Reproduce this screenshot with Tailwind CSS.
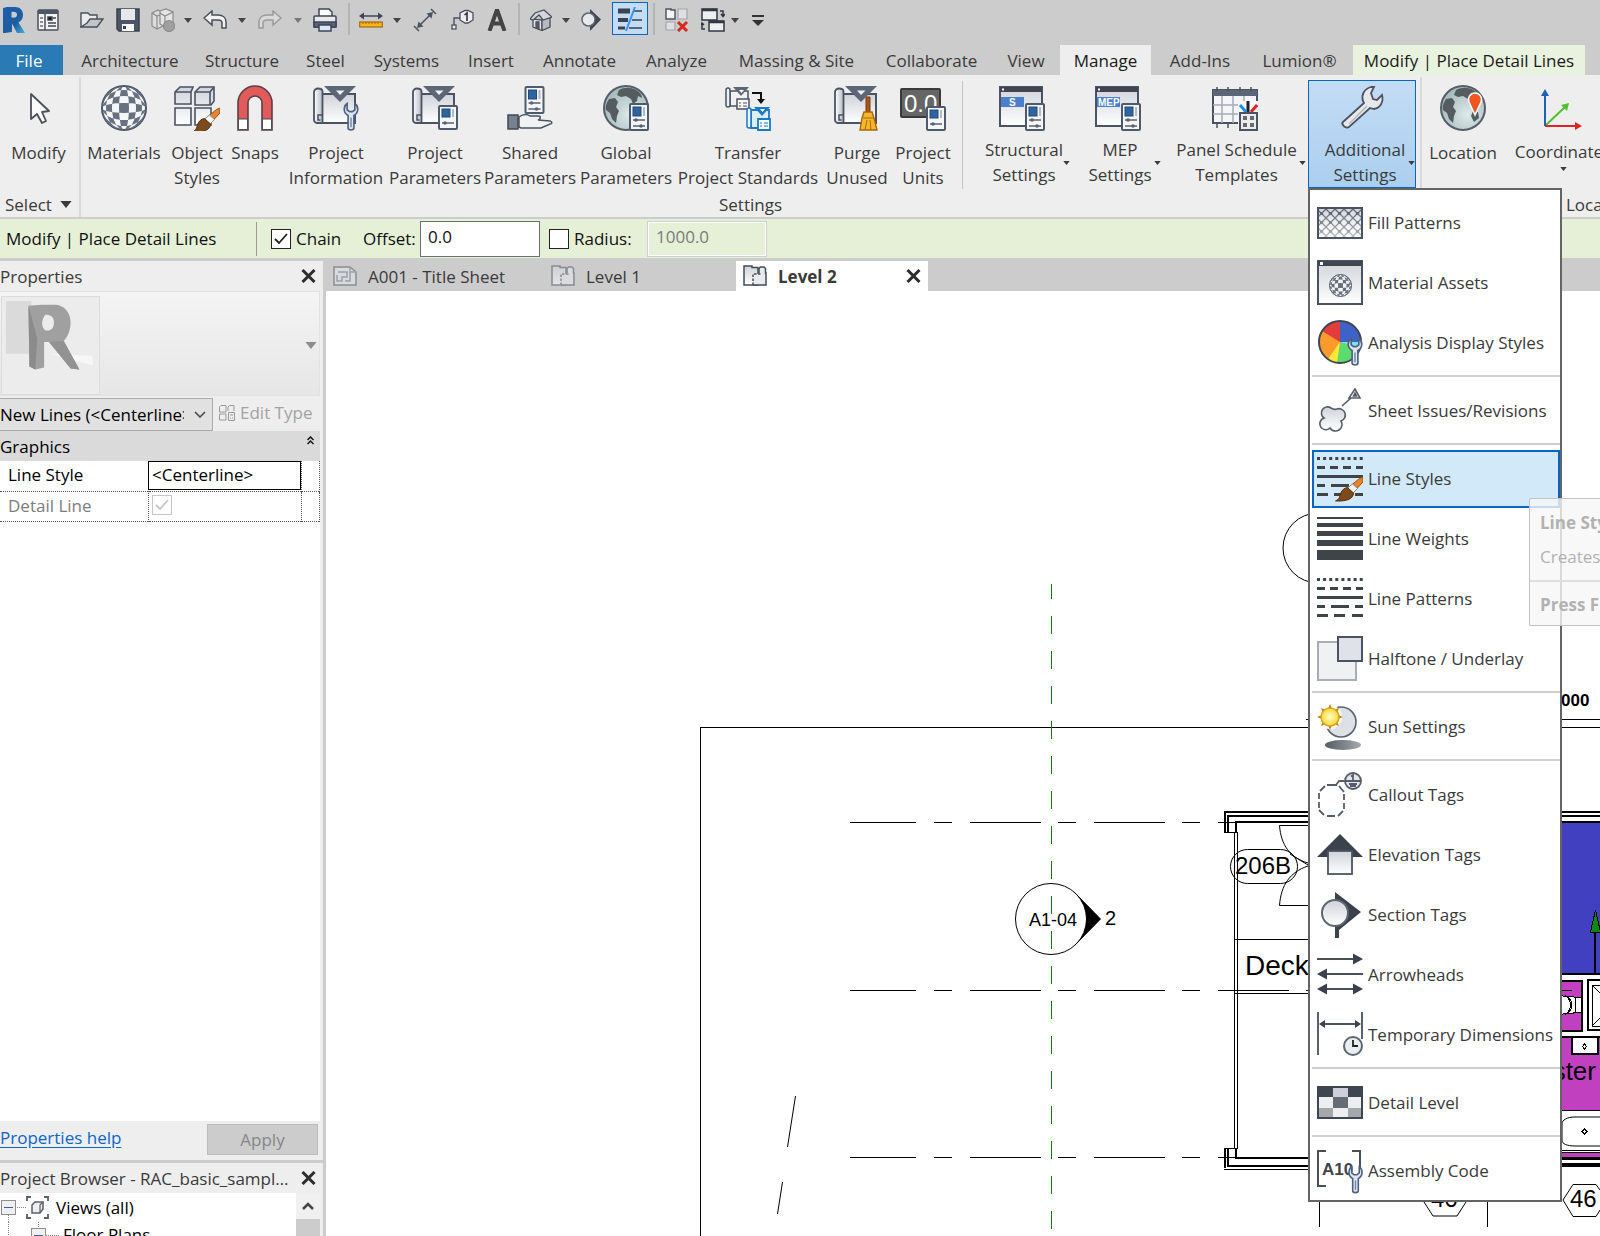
<!DOCTYPE html>
<html lang="en">

<head>
    <meta charset="UTF-8" />
    <title>Revit - Level 2</title>
    <meta name="viewport" content="width=device-width, initial-scale=1.0" />
    <script src="https://cdn.jsdelivr.net/npm/@tailwindcss/browser@4"></script>
    <style>
        body {
            font-family: 'Open Sans', 'Noto Sans', sans-serif;
        }
    </style>
</head>

<body class="h-screen flex flex-col overflow-hidden bg-[#cccccc] text-[17px] leading-[25px] text-[#3a3a3a]">

    <!-- Shared icon parts -->
    <svg width="0" height="0" class="absolute" aria-hidden="true">
        <defs>
            <linearGradient id="steel" x1="0" y1="0" x2="0" y2="1">
                <stop offset="0" stop-color="#cfd3db" />
                <stop offset="1" stop-color="#ffffff" />
            </linearGradient>
            <linearGradient id="steelH" x1="0" y1="0" x2="1" y2="0">
                <stop offset="0" stop-color="#ffffff" />
                <stop offset="1" stop-color="#b4bac6" />
            </linearGradient>
            <linearGradient id="logo" x1="0" y1="0" x2="1" y2="1">
                <stop offset="0" stop-color="#1c5fb0" />
                <stop offset="0.6" stop-color="#1d5c9e" />
                <stop offset="1" stop-color="#46aee0" />
            </linearGradient>
            <radialGradient id="sea" cx="0.6" cy="0.65" r="0.6">
                <stop offset="0" stop-color="#dfeaea" />
                <stop offset="1" stop-color="#a9bcc0" />
            </radialGradient>
            <radialGradient id="sunny" cx="0.5" cy="0.5" r="0.5">
                <stop offset="0" stop-color="#fffbd0" />
                <stop offset="1" stop-color="#f9d832" />
            </radialGradient>
            <linearGradient id="shade" x1="0" y1="0" x2="1" y2="0">
                <stop offset="0" stop-color="#555c66" />
                <stop offset="1" stop-color="#a4a8ae" />
            </linearGradient>
            <linearGradient id="fade" x1="0" y1="0" x2="0" y2="1">
                <stop offset="0" stop-color="#ffffff" stop-opacity="0" />
                <stop offset="1" stop-color="#ffffff" stop-opacity="0.6" />
            </linearGradient>
            <pattern id="lattice" width="9" height="9" patternUnits="userSpaceOnUse">
                <path d="M0 0l9 9M9 0L0 9" stroke="#5a606c" stroke-width="1.300" />
                <circle cx="4.500" cy="4.500" r="1.600" fill="#4a505c" />
            </pattern>
            <symbol id="roll" viewBox="0 0 46 46">
                <path d="M9 9H42V38H9z" fill="url(#steel)" stroke="#4b5362" stroke-width="2" />
                <path d="M5 3.500c2.500 0 4.500 1 4.500 3V38H4c-2 0-3-1.500-3-3.500V7C1 5 3 3.500 5 3.500z" fill="url(#steelH)" stroke="#4b5362" stroke-width="1.800" />
                <path d="M9.500 30H5v5h2.500" fill="none" stroke="#4b5362" stroke-width="1.500" />
                <path d="M11 1H43L27 17z" fill="#5d6677" />
                <path d="M23 5.500h8.500L27 10z" fill="#f2f2f4" />
            </symbol>
            <symbol id="wrench" viewBox="0 0 16 30">
                <path d="M4 1.500C1.500 3 1 5.500 1 7.500c0 3 1.500 5 4 6.500V27c0 1.500 1 2 3 2s3-.5 3-2V14c2.500-1.500 4-3.500 4-6.500 0-2-.5-4.500-3-6V8L9.500 10h-3L4 8z" fill="#dfe5f0" stroke="#4d617f" stroke-width="1.700" />
                <path d="M8 16v10" stroke="#6f86a8" stroke-width="1.500" />
            </symbol>
            <symbol id="sheet" viewBox="0 0 20 28">
                <rect x="1" y="1" width="18" height="26" rx="1" fill="#f4f5f7" stroke="#4f5a6c" stroke-width="2" />
                <rect x="4" y="4" width="8" height="9" fill="#2f659f" stroke="#1f4a7e" />
                <rect x="14" y="4" width="2" height="9" fill="#b3b8c2" />
                <path d="M4 17H16M4 23H16" stroke="#5a6373" stroke-width="1.500" />
                <circle cx="7" cy="17" r="1.800" fill="#5a6373" />
                <circle cx="12" cy="23" r="1.800" fill="#5a6373" />
            </symbol>
            <symbol id="sheetS" viewBox="0 0 20 25">
                <rect x="1" y="1" width="18" height="23" rx="1" fill="#f4f5f7" stroke="#4f5a6c" stroke-width="2" />
                <rect x="4" y="4" width="8" height="8" fill="#2f659f" stroke="#1f4a7e" />
                <rect x="14" y="4" width="2" height="8" fill="#b3b8c2" />
                <path d="M4 18H16" stroke="#5a6373" stroke-width="1.500" />
                <circle cx="7" cy="18" r="1.800" fill="#5a6373" />
            </symbol>
            <symbol id="globe" viewBox="0 0 46 46">
                <circle cx="23" cy="23" r="22" fill="url(#sea)" stroke="#555d66" stroke-width="2" />
                <path d="M16 5c5-3 12-3 17 0 4 2 6 5 6 8l-4-2-1 5-4 3-2-5-5-3-5 1-4-2zM6 14l6-1 3 4-2 5 3 4-2 5-1 7-4-4-2-6-4-3c-1-4 1-8 3-11zM33 26l5 1 1 6-5 4-3-6z" fill="#555c60" />
            </symbol>
            <symbol id="ball" viewBox="0 0 46 46">
                <circle cx="23" cy="23" r="22" fill="#f5f6f8" stroke="#4b5362" stroke-width="2" />
                <path fill-rule="evenodd" fill="#68717f" d="M1 23a22 22 0 1 0 44 0a22 22 0 1 0-44 0zM5 23a18 22 0 1 0 36 0a18 22 0 1 0-36 0zM11 23a12 22 0 1 0 24 0a12 22 0 1 0-24 0zM18 23a5 22 0 1 0 10 0a5 22 0 1 0-10 0zM1 23a22 18 0 1 0 44 0a22 18 0 1 0-44 0zM1 23a22 12 0 1 0 44 0a22 12 0 1 0-44 0zM1 23a22 5 0 1 0 44 0a22 5 0 1 0-44 0z" />
            </symbol>
            <symbol id="brush" viewBox="0 0 28 26">
                <path d="M24.500 2.500L28 1v5L20.500 14 16 9.500z" fill="#e8832a" stroke="#9a4f12" />
                <path d="M17.500 8l5 4.500-5 5L12 12.500z" fill="#f3f3f3" stroke="#8f8f8f" />
                <path d="M12.500 11.500l6 5.500c0 5-5 8.500-18 8 4-2 4-4 5-7 1-4 4-6 7-6.500z" fill="#7d4a1c" stroke="#553010" />
            </symbol>
            <symbol id="plan" viewBox="0 0 24 22">
                <path d="M1 1H9V2.500H15V20H1z" fill="url(#steel)" stroke="#444b58" stroke-width="1.500" />
                <path d="M16 8V3.500h1.500V2H21v1.500h1.500V8H23V20H10V9H16" fill="#e9ebef" />
                <path d="M16 8V3.500L17.500 2H21l1.500 1.500V8H23V20H10" fill="none" stroke="#444b58" stroke-width="1.500" />
                <path d="M10 20V9H18" fill="none" stroke="#444b58" stroke-width="1.500" stroke-dasharray="2.500 1.500" />
            </symbol>
            <symbol id="caret" viewBox="0 0 8 5">
                <path d="M0 0H8L4 5z" fill="currentColor" />
            </symbol>
        </defs>
    </svg>

    <!-- Quick access toolbar -->
    <header class="h-[45px] shrink-0 flex items-start pt-[2px] text-[#444]">
        <span class="w-[26px] h-9 flex items-center pl-[3px]">
            <svg class="w-[22px] h-[28px]" viewBox="0 0 22 28"><path fill-rule="evenodd" d="M0 2l4-1h8c5 0 8 3 8 8 0 4-2 6-4.500 7.500L22 27h-8L9 17.500V26L2 27H0zM8.500 6v5.500c4 .5 5.500-.5 5.500-2.800S12 5.500 8.500 6z" fill="url(#logo)" /></svg>
        </span>
        <button aria-label="Home" class="w-11 h-9 flex items-center justify-center">
            <svg class="w-[22px] h-[22px]" viewBox="0 0 22 22"><rect x="1" y="1" width="20" height="20" rx="1" fill="#f3f3f3" stroke="#4b4f58" stroke-width="1.500" /><path d="M1 1H21V5H1z" fill="#4b5666" /><path d="M8 5V21" stroke="#4b4f58" stroke-width="1.500" /><path d="M3 9H6M3 13H6M3 17H6" stroke="#8b8f97" stroke-width="2" /><path d="M11 8H15V11H11zM16 9H19M11 14H19M11 17H19" stroke="#3f444d" stroke-width="1.500" /></svg>
        </button>
        <button aria-label="Open" class="w-[44px] h-9 flex items-center justify-center">
            <svg class="w-6 h-5" viewBox="0 0 24 20"><path d="M1 17V3h7l2 2h7v4" fill="#ececef" stroke="#4b4f58" stroke-width="1.400" /><path d="M1 17L7 13l3-4H23L17 17z" fill="#bfc4cd" stroke="#4b4f58" stroke-width="1.400" /></svg>
        </button>
        <button aria-label="Save" class="w-7 h-9 flex items-center justify-center">
            <svg class="w-6 h-6" viewBox="0 0 24 24"><path d="M1 1H23V23H3L1 21z" fill="#4c5669" stroke="#3a4150" stroke-width="1.500" /><path d="M5 1H19V12H5z" fill="#e6e8ec" /><path d="M6 16H18V23H6z" fill="#f6f6f6" /><path d="M7 18H10V21H7z" fill="#3a4150" /></svg>
        </button>
        <button aria-label="Synchronize" class="w-[42px] h-9 flex items-center justify-center">
            <svg class="w-6 h-6" viewBox="0 0 24 24" stroke="#8c8c8c" stroke-width="1.200"><path d="M1 5l6-3 5 3v13l-6 3-5-3z" fill="#dcdcdc" /><path d="M9 3l6-2 7 3v11l-8 4-5-3z" fill="#e4e4e4" /><path d="M9 5l5 3 8-4M14 8v10M1 5l5 3 3-1M6 8v12" fill="none" /><circle cx="18" cy="18" r="5.500" fill="#a0a0a0" /></svg>
        </button>
        <span class="w-2 h-9 flex items-center justify-center"><svg class="w-2 h-[5px]"><use href="#caret" /></svg></span>
        <button aria-label="Undo" class="w-[46px] h-9 flex items-center justify-center">
            <svg class="w-6 h-5" viewBox="0 0 24 20"><path d="M1 8L9 1V5h6c5 0 8 3 8 7v6h-4v-5c0-2-1-3-4-3H9v5z" fill="#f1f1f1" stroke="#4b4f58" stroke-width="1.500" /></svg>
        </button>
        <span class="w-2 h-9 flex items-center justify-center"><svg class="w-2 h-[5px]"><use href="#caret" /></svg></span>
        <button aria-label="Redo" class="w-12 h-9 flex items-center justify-center">
            <svg class="w-6 h-5" viewBox="0 0 24 20"><path d="M23 8L15 1V5H9c-5 0-8 3-8 7v6h4v-5c0-2 1-3 4-3h6v5z" fill="#d9d9d9" stroke="#9b9b9b" stroke-width="1.500" /></svg>
        </button>
        <span class="w-2 h-9 flex items-center justify-center text-[#777]"><svg class="w-2 h-[5px]"><use href="#caret" /></svg></span>
        <button aria-label="Print" class="w-[46px] h-9 flex items-center justify-center">
            <svg class="w-6 h-6" viewBox="0 0 24 24" stroke="#3f4655" stroke-width="1.500"><path d="M6 8V1h10l3 3v4" fill="#fafafa" /><rect x="1" y="8" width="22" height="11" rx="1" fill="#e8e9ec" /><path d="M1 14H23V19H1z" fill="#5b6475" /><path d="M6 17H18V23H6z" fill="#d9eaf6" /></svg>
        </button>
        <span class="w-[2px] h-8 mt-px bg-[#b4b4b4]"></span>
        <button aria-label="Measure" class="w-[42px] h-9 flex items-center justify-center">
            <svg class="w-6 h-4" viewBox="0 0 24 16"><path d="M2 4H22" stroke="#3f4655" stroke-width="1.500" /><path d="M0 4L5 .5V7.500zM24 4L19 .5V7.500z" fill="#3f4655" /><rect x=".7" y="10" width="22.600" height="5" fill="#f7b51c" stroke="#a8690b" stroke-width="1.200" /><path d="M4 10v2M7 10v2M10 10v2M13 10v2M16 10v2M19 10v2" stroke="#a8690b" /></svg>
        </button>
        <span class="w-[10px] h-9 flex items-center justify-center"><svg class="w-2 h-[5px]"><use href="#caret" /></svg></span>
        <button aria-label="Aligned dimension" class="w-[46px] h-9 flex items-center justify-center">
            <svg class="w-6 h-6" viewBox="0 0 24 24" fill="#4b5261" stroke="#4b5261"><path d="M6 18L18 6M1 18l5 5M18 1l5 5" stroke-width="1.500" fill="none" /><path d="M4 20l1.500-6.500 5 5zM20 4l-1.500 6.500-5-5z" stroke="none" /></svg>
        </button>
        <button aria-label="Tag by category" class="w-7 h-9 flex items-center justify-center">
            <svg class="w-[23px] h-[22px]" viewBox="0 0 23 22"><path d="M3 17V9H9" fill="none" stroke="#4b5261" stroke-width="1.400" /><rect x="1" y="16" width="4" height="4" fill="#eee" stroke="#4b5261" stroke-width="1.300" /><path d="M14 1.500h3L22 4v7l-5 3h-3L9 11V4z" fill="#ececef" stroke="#4b5261" stroke-width="1.300" /><path d="M13.500 6l2.500-2v8" fill="none" stroke="#333" stroke-width="1.600" /></svg>
        </button>
        <button aria-label="Text" class="w-[42px] h-9 flex items-center justify-center">
            <svg class="w-5 h-[22px]" viewBox="0 0 20 22" fill="none" stroke="#444"><path d="M2.500 22L9.500 2h1L17.500 22M5 14.500H15" stroke-width="4" /></svg>
        </button>
        <span class="w-[2px] h-8 mt-px bg-[#b4b4b4]"></span>
        <button aria-label="Default 3D view" class="w-[42px] h-9 flex items-center justify-center">
            <svg class="w-[22px] h-[22px]" viewBox="0 0 22 22" stroke="#4b4f58" stroke-width="1.300"><path d="M3 10V18l9 3.500V11z" fill="#e4e6ea" /><path d="M12 11V21.500l8-3.500V8z" fill="#b5bac3" /><path d="M0 10L5 4 14 1l8 7-9 3-4-5-6 5z" fill="#d3d6dc" /><path d="M6 13h3v7l-3-1z" fill="#5a6170" /></svg>
        </button>
        <span class="w-2 h-9 flex items-center justify-center"><svg class="w-2 h-[5px]"><use href="#caret" /></svg></span>
        <button aria-label="Section" class="w-[42px] h-9 flex items-center justify-center">
            <svg class="w-5 h-6" viewBox="0 0 20 24"><path d="M9 1L20 11.500 9 23z" fill="#414752" /><circle cx="7.500" cy="11.500" r="6.500" fill="#e7e9ed" stroke="#60666f" stroke-width="1.500" /></svg>
        </button>
        <button aria-label="Thin lines" class="w-9 h-[33px] flex items-center justify-center bg-[#c2dcf4] border border-[#0a64c2]">
            <svg class="w-[26px] h-6" viewBox="0 0 26 24"><path d="M1 4H13" stroke="#3b4250" stroke-width="5" /><path d="M1 13H11" stroke="#3b4250" stroke-width="4" /><path d="M1 21H8" stroke="#3b4250" stroke-width="3" /><path d="M17 4H25M15 13H25M12 21H25" stroke="#3b4250" stroke-width="1.500" /><path d="M18 0L9 24" stroke="#3c92f0" stroke-width="2" /></svg>
        </button>
        <span class="w-[2px] h-8 mt-px ml-[5px] bg-[#b4b4b4]"></span>
        <button aria-label="Close inactive views" class="w-[44px] h-9 flex items-center justify-center">
            <svg class="w-6 h-6" viewBox="0 0 24 24"><path d="M1 1H6V2H10V11H1z" fill="#f4f4f6" stroke="#4b5261" stroke-width="1.400" /><path d="M13 1H22V11H13zM1 14H10V22H1z" fill="#dedfe3" stroke="#a2a5ac" stroke-width="1.200" /><path d="M13 14l9 9M22 14l-9 9" stroke="#d4291c" stroke-width="3" /></svg>
        </button>
        <button aria-label="Switch windows" class="w-7 h-9 flex items-center justify-center">
            <svg class="w-6 h-6" viewBox="0 0 24 24" stroke="#33373f" stroke-width="1.500"><rect x="1" y="1" width="15" height="11" fill="#eeeff1" /><rect x="8" y="13" width="15" height="10" fill="#eeeff1" /><path d="M1 2H16M8 14H23" stroke-width="2.500" /><path d="M19 3h3v5M20 6l2 2.500L24 6M4 21H1V15M0 17l1-2 2 2" fill="none" /></svg>
        </button>
        <span class="w-4 h-9 flex items-center justify-center"><svg class="w-2 h-[5px]"><use href="#caret" /></svg></span>
        <button aria-label="Customize toolbar" class="w-[30px] h-9 flex items-center justify-center">
            <svg class="w-3 h-[11px]" viewBox="0 0 12 11"><path d="M0 1H12" stroke="#333" stroke-width="2" /><path d="M0 5H12L6 11z" fill="#333" /></svg>
        </button>
    </header>

    <!-- Ribbon tabs -->
    <nav class="h-[30px] shrink-0 flex text-center leading-[31px] whitespace-nowrap">
        <button class="w-[63px] pr-[5px] mr-[5px] bg-[#2a7ab5] text-white">File</button>
        <button class="w-[124px]">Architecture</button>
        <button class="w-[100px]">Structure</button>
        <button class="w-[67px]">Steel</button>
        <button class="w-[95px]">Systems</button>
        <button class="w-[74px]">Insert</button>
        <button class="w-[103px]">Annotate</button>
        <button class="w-[91px]">Analyze</button>
        <button class="w-[149px]">Massing &amp; Site</button>
        <button class="w-[121px]">Collaborate</button>
        <button class="w-[68px]">View</button>
        <button class="w-[91px] bg-[#eeeeee] text-[#1a1a1a]">Manage</button>
        <button class="w-[98px]">Add-Ins</button>
        <button class="w-[101px]">Lumion®</button>
        <button class="w-[232px] ml-[3px] bg-[#e9f2de] text-[#1a1a1a]">Modify | Place Detail Lines</button>
    </nav>

    <!-- Ribbon -->
    <section class="h-[144px] shrink-0 flex bg-[#eeeeee] border-b-2 border-[#cccccc] whitespace-nowrap">
        <div class="w-[79px] shrink-0 flex flex-col justify-between">
            <button class="flex flex-col items-center pt-[10px] pr-[2px]">
                <svg class="w-[46px] h-[46px]" viewBox="0 0 46 46"><path d="M15 9V34l6-5 5 9 4-2-4-9 7-1z" fill="#fbfbfb" stroke="#4b4f58" stroke-width="1.800" stroke-linejoin="round" /></svg>
                <span class="mt-[9px]">Modify</span>
            </button>
            <button class="flex items-center gap-2 pl-[5px]">Select <svg class="w-3 h-[7px]"><use href="#caret" /></svg></button>
        </div>
        <div class="w-[2px] mt-[2px] shrink-0 bg-[#dadada]"></div>

        <div class="w-[1339px] shrink-0 flex flex-col justify-between">
            <div class="flex">
                <div class="flex gap-1 items-start pt-[10px] pl-[3px] text-center">
                    <button class="w-[80px] flex flex-col items-center">
                        <svg class="w-[46px] h-[46px]"><use href="#ball" /></svg>
                        <span class="mt-[9px]">Materials</span>
                    </button>
                    <button class="w-[58px] flex flex-col items-center">
                        <svg class="w-[46px] h-[46px]" viewBox="0 0 46 46"><g fill="url(#steel)" stroke="#4b5362" stroke-width="1.600"><path d="M1 7l5-5H19L17 7V19H1zM21 7l5-5H40V16L37 20H21zM1 23H17V40H1zM21 23H37V40H21z" /><path d="M1 7H17M21 7H36l4-5M36 7V20" fill="none" /></g><svg x="18" y="22" width="28" height="26"><use href="#brush" /></svg></svg>
                        <span class="mt-[9px]">Object<br>Styles</span>
                    </button>
                    <button class="w-[50px] flex flex-col items-center">
                        <svg class="w-[46px] h-[46px]" viewBox="0 0 46 46"><path d="M6 45V18a17 17 0 0 1 34 0V45H30V18a7 7 0 0 0-14 0V45z" fill="#e25a5a" stroke="#5a4048" stroke-width="1.600" /><path d="M6.500 34H15.500V44.500H6.500zM30.500 34H39.500V44.500H30.500z" fill="#fff" stroke="#4b4f58" /></svg>
                        <span class="mt-[9px]">Snaps</span>
                    </button>
                    <button class="w-[104px] flex flex-col items-center">
                        <svg class="w-[46px] h-[46px]" viewBox="0 0 46 46"><use href="#roll" /><svg x="30" y="17" width="16" height="29"><use href="#wrench" /></svg></svg>
                        <span class="mt-[9px]">Project<br>Information</span>
                    </button>
                    <button class="w-[86px] flex flex-col items-center">
                        <svg class="w-[46px] h-[46px]" viewBox="0 0 46 46"><use href="#roll" /><svg x="26" y="20" width="20" height="25"><use href="#sheetS" /></svg></svg>
                        <span class="mt-[9px]">Project<br>Parameters</span>
                    </button>
                    <button class="w-[96px] flex flex-col items-center">
                        <svg class="w-[46px] h-[46px]" viewBox="0 0 46 46"><svg x="17" y="1" width="21" height="28"><use href="#sheet" /></svg><path d="M12 32c4-3 8-3 11-1h8c3 0 3 3 0 4l12 1c3 1 2 3 0 3L34 43H14l-2-1z" fill="#f1f2f4" stroke="#4b5362" stroke-width="1.500" /><path d="M1 30H11V44H1z" fill="#77818f" stroke="#414855" stroke-width="1.500" /></svg>
                        <span class="mt-[9px]">Shared<br>Parameters</span>
                    </button>
                    <button class="w-[88px] flex flex-col items-center">
                        <svg class="w-[46px] h-[46px]" viewBox="0 0 46 46"><use href="#globe" /><svg x="26" y="18" width="20" height="28"><use href="#sheet" /></svg></svg>
                        <span class="mt-[9px]">Global<br>Parameters</span>
                    </button>
                    <button class="w-[148px] flex flex-col items-center">
                        <svg class="w-[46px] h-[46px]" viewBox="0 0 46 46"><path d="M5 6H23V21H5z" fill="#f0f1f3" stroke="#4b5362" stroke-width="1.500" /><rect x="1" y="3" width="4" height="19" rx="2" fill="#f0f1f3" stroke="#4b5362" stroke-width="1.500" /><path d="M8 2H24L16 11z" fill="#5d6677" /><path d="M14 5h5l-2.500 3z" fill="#fff" /><path d="M12 14H24V24H12z" fill="#f7f7f7" stroke="#4b5362" stroke-width="1.500" /><path d="M14 18H16M18 18H22M14 21H16M18 21H22" stroke="#4b5362" /><path d="M27 8H36V16" fill="none" stroke="#111" stroke-width="2" /><path d="M32 14H40L36 19z" fill="#111" /><path d="M26 25H44V43H26z" fill="#dcecf9" stroke="#1a78c8" stroke-width="1.800" /><rect x="22" y="23" width="4" height="20" rx="2" fill="#eaf4fc" stroke="#1a78c8" stroke-width="1.500" /><path d="M29 22H45L37 31z" fill="#1a78c8" /><path d="M35 24h5l-2.500 3z" fill="#fff" /><path d="M33 34H45V45H33z" fill="#f2f9ff" stroke="#1a78c8" stroke-width="1.800" /><path d="M35 38H37M39 38H43M35 41H37M39 41H43" stroke="#1a78c8" /></svg>
                        <span class="mt-[9px]">Transfer<br>Project Standards</span>
                    </button>
                    <button class="w-[62px] flex flex-col items-center">
                        <svg class="w-[46px] h-[46px]" viewBox="0 0 46 46"><use href="#roll" /><path d="M32 12H36V27H32z" fill="#a5561a" stroke="#7c3c0e" /><path d="M30 27H38L40 33 43 45H26L28 33z" fill="#f6b62a" stroke="#a8680e" stroke-width="1.400" /><path d="M29 33H40M33 35L31 45M36 35L37 45" stroke="#a8680e" /></svg>
                        <span class="mt-[9px]">Purge<br>Unused</span>
                    </button>
                    <button class="w-[62px] flex flex-col items-center">
                        <svg class="w-[46px] h-[46px]" viewBox="0 0 46 46"><rect x="1" y="4" width="39" height="28" rx="1" fill="#666" stroke="#3a3a3a" stroke-width="2" /><text x="4" y="27" font-size="24" fill="#fff" font-family="Liberation Sans, sans-serif">0.0</text><svg x="26" y="21" width="20" height="25"><use href="#sheetS" /></svg></svg>
                        <span class="mt-[9px]">Project<br>Units</span>
                    </button>
                </div>
                <div class="w-px ml-2 mt-[6px] h-[108px] bg-[#c4c4c4]"></div>
                <div class="flex gap-[2px] items-start pt-[5px] pl-3 text-center">
                    <button class="relative w-[98px] h-[108px] pt-[5px] flex flex-col items-center">
                        <svg class="w-[46px] h-[46px] mr-1" viewBox="0 0 46 46"><rect x="1" y="2" width="42" height="39" fill="url(#steel)" stroke="#4b5362" stroke-width="2" /><path d="M1 2H43V7H1z" fill="#3f4652" /><path d="M3 3.500H5V5.500H3z" fill="#fff" /><path d="M2 12H25V22H2z" fill="#4a7fd0" /><text x="10" y="21" font-size="10" font-weight="700" fill="#fff" font-family="Liberation Sans, sans-serif">S</text><svg x="26" y="18" width="20" height="28"><use href="#sheet" /></svg></svg>
                        <span class="mt-[6px]">Structural<br>Settings</span>
                        <svg class="absolute right-[3px] bottom-[23px] w-[7px] h-1"><use href="#caret" /></svg>
                    </button>
                    <button class="relative w-[90px] h-[108px] pt-[5px] flex flex-col items-center">
                        <svg class="w-[46px] h-[46px] mr-1" viewBox="0 0 46 46"><rect x="1" y="2" width="42" height="39" fill="url(#steel)" stroke="#4b5362" stroke-width="2" /><path d="M1 2H43V7H1z" fill="#3f4652" /><path d="M3 3.500H5V5.500H3z" fill="#fff" /><path d="M2 12H25V22H2z" fill="#4a7fd0" /><text x="3" y="21" font-size="10" font-weight="700" fill="#fff" font-family="Liberation Sans, sans-serif">MEP</text><svg x="26" y="18" width="20" height="28"><use href="#sheet" /></svg></svg>
                        <span class="mt-[6px]">MEP<br>Settings</span>
                        <svg class="absolute right-1 bottom-[23px] w-[7px] h-1"><use href="#caret" /></svg>
                    </button>
                    <button class="relative w-[139px] h-[108px] pt-[5px] flex flex-col items-center">
                        <svg class="w-[46px] h-[46px] mr-1" viewBox="0 0 46 46"><path d="M1 5H45V38H1z" fill="#f6f6f8" stroke="#4b5362" stroke-width="2" /><path d="M1 5H45V11H1z" fill="#5d6677" /><path d="M10 11V38M21 11V38M32 11V38M1 20H45M1 29H45" fill="none" stroke="#a5aab4" stroke-width="1.500" /><path d="M5 2V6M16 2V6M28 2V6M39 2V6M5 38V43M16 38V43" stroke="#4b5362" stroke-width="1.500" /><path d="M26 16H46V46H26z" fill="#f6f6f8" /><path d="M36 16V28" stroke="#222" stroke-width="3" /><path d="M28 20L34 27" stroke="#1e8fee" stroke-width="3" /><path d="M45 20L39 27" stroke="#e3242b" stroke-width="3" /><rect x="28" y="28" width="17" height="17" fill="#ececee" stroke="#4b5362" stroke-width="2" /><path d="M31 31H35V35H31zM38 31H42V35H38zM31 38H35V42H31zM38 38H42V42H38z" fill="#6a6a6a" /></svg>
                        <span class="mt-[6px]">Panel Schedule<br>Templates</span>
                        <svg class="absolute right-0 bottom-[23px] w-[7px] h-1"><use href="#caret" /></svg>
                    </button>

                    <div class="relative">
                        <button aria-expanded="true" class="relative w-[108px] h-[108px] pt-[4px] pl-[6px] flex flex-col items-center bg-linear-to-b from-[#c3dcf4] to-[#abcff0] border border-[#0a64c2]">
                            <svg class="w-[46px] h-[46px] mr-[6px]" viewBox="0 0 46 46"><path d="M24 16c-2-6 1-12 8-14h3l-3 6 2 6 4 1 5-5c2 7-2 13-8 14l-4-1L11 41c-2 3-6 1-7-1-1-1-1-2 0-3L25 18z" fill="#e6e8ec" stroke="#4b5362" stroke-width="1.800" /><path d="M28 21L10 39" stroke="#b3b8c2" stroke-width="1.500" /></svg>
                            <span class="mt-[6px]">Additional<br>Settings</span>
                            <svg class="absolute right-0 bottom-[22px] w-[7px] h-1"><use href="#caret" /></svg>
                        </button>

                        <!-- Additional Settings menu -->
                        <ul class="absolute z-10 left-0 top-full w-[254px] pl-[2px] pt-1 flex flex-col gap-[2px] bg-white border-2 border-[#646464] text-left [&_button]:flex [&_button]:items-center [&_button]:w-full [&_button]:h-[58px] [&_button]:pl-[5px] [&_button]:pb-px [&_button]:gap-[5px]">
                            <li><button>
                                <svg class="w-[46px] h-[46px]" viewBox="0 0 46 46"><rect x="1" y="8" width="44" height="30" fill="url(#steel)" /><rect x="1" y="8" width="44" height="30" fill="url(#lattice)" /><rect x="1" y="8" width="44" height="30" fill="url(#fade)" stroke="#4b5362" stroke-width="2" /></svg>Fill Patterns</button></li>
                            <li><button>
                                <svg class="w-[46px] h-[46px]" viewBox="0 0 46 46"><rect x="1" y="1" width="44" height="43" fill="url(#steel)" stroke="#4b5362" stroke-width="2" /><path d="M1 1H45V6H1z" fill="#3f4652" /><path d="M3 2H6V5H3z" fill="#fff" /><svg x="12" y="14" width="23" height="23"><use href="#ball" /></svg></svg>Material Assets</button></li>
                            <li><button>
                                <svg class="w-[46px] h-[46px]" viewBox="0 0 46 46"><circle cx="23" cy="22" r="21" fill="#ff9a2c" /><path d="M23 22V1A21 21 0 0 0 5 11z" fill="#e23c3c" /><path d="M23 22V1A21 21 0 0 1 44 22z" fill="#3f62c8" /><path d="M23 22H44A21 21 0 0 1 43 28z" fill="#77e6f2" /><path d="M23 22L43 28A21 21 0 0 1 20 43z" fill="#5bdc6c" /><path d="M23 22L20 43A21 21 0 0 1 11 39z" fill="#fbe83a" /><circle cx="23" cy="22" r="21" fill="none" stroke="#3f4652" stroke-width="2" /><svg x="30" y="17" width="16" height="29"><use href="#wrench" /></svg></svg>Analysis Display Styles</button></li>
                            <li class="h-[6px] pt-px"><hr class="border-t-2 border-[#d0d0d0]" /></li>
                            <li><button>
                                <svg class="w-[46px] h-[46px]" viewBox="0 0 46 46" stroke="#565d6a" stroke-width="1.600"><path d="M14 20a6 6 0 1 0-7 10a6 6 0 1 0 6 10a6.500 6.500 0 1 0 11-7a6 6 0 1 0-4-12q-3 1-6-1z" fill="url(#steel)" /><path d="M25 18L34 10" /><path d="M32 10H43L38 1z" fill="none" /><path d="M36.500 8l1.500-3 1.500 3z" /></svg>Sheet Issues/Revisions</button></li>
                            <li class="h-[6px] pt-px"><hr class="border-t-2 border-[#d0d0d0]" /></li>
                            <li class="relative"><button class="bg-[#d1e9f9] outline-2 -outline-offset-2 outline-[#0a64c2]">
                                <svg class="w-[46px] h-[46px]" viewBox="0 0 46 46" stroke="#3f4449" stroke-width="3"><path d="M0 2.500H46" stroke-dasharray="3 3.100" /><path d="M0 11.500H46" stroke-dasharray="8 5" /><path d="M0 20.500H46" /><path d="M0 29.500H8M14 29.500H32" /><path d="M0 38.500H11M17 38.500H28M38 38.500H46" /><svg x="18" y="20" width="28" height="26" stroke-width="1"><use href="#brush" /></svg></svg>Line Styles</button>
                                <!-- Fading tooltip -->
                                <div role="tooltip" class="absolute left-[217px] top-[48px] w-[71px] h-[128px] overflow-hidden bg-[#f6f6f6]/80 border border-r-0 border-[#c4c4c4] rounded-l-xs text-[#b2b2b2]">
                                    <p class="pl-[10px] pt-[11px] font-bold">Line Styles</p>
                                    <p class="pl-[10px] pt-[9px] h-[45px]">Creates</p>
                                    <p class="pl-[10px] pt-[10px] border-t-2 border-[#dedede] font-bold">Press F1</p>
                                </div>
                            </li>
                            <li><button>
                                <svg class="w-[46px] h-[46px]" viewBox="0 0 46 46" fill="#3f4449"><path d="M0 1H46V3H0zM0 7H46V11H0zM0 15H46V20H0zM0 24H46V30H0zM0 34H46V44H0z" /></svg>Line Weights</button></li>
                            <li><button>
                                <svg class="w-[46px] h-[46px]" viewBox="0 0 46 46" stroke="#3f4449" stroke-width="3"><path d="M0 3.500H46" stroke-dasharray="3 3.100" /><path d="M0 12.500H46" stroke-dasharray="8 5" /><path d="M0 21.500H46" /><path d="M0 30.500H8M14 30.500H32M38 30.500H46" /><path d="M0 39.500H11M17 39.500H28M35 39.500H46" /></svg>Line Patterns</button></li>
                            <li><button>
                                <svg class="w-[46px] h-[46px]" viewBox="0 0 46 46"><rect x="1" y="6" width="38" height="38" fill="#f0f1f3" stroke="#a9adb5" stroke-width="2" /><rect x="21" y="1" width="24" height="24" fill="#dfe2e8" stroke="#4b5362" stroke-width="2" /></svg>Halftone / Underlay</button></li>
                            <li class="h-[6px] pt-px"><hr class="border-t-2 border-[#d0d0d0]" /></li>
                            <li><button>
                                <svg class="w-[46px] h-[46px]" viewBox="0 0 46 46"><circle cx="24" cy="18" r="15" fill="#dde1e7" stroke="#5a6270" stroke-width="1.600" /><ellipse cx="26" cy="41" rx="18" ry="5" fill="url(#shade)" /><circle cx="13" cy="13" r="12" fill="#fff" /><path d="M13 0l2 5h-4zM13 26l2-5h-4zM0 13l5 2v-4zM26 13l-5 2v-4zM4 4l5 2-3 3zM22 4l-2 5-3-3zM4 22l2-5 3 3zM22 22l-5-2 3-3z" fill="#c17a14" /><circle cx="13" cy="13" r="9" fill="url(#sunny)" stroke="#e0a51c" stroke-width="1.500" /></svg>Sun Settings</button></li>
                            <li class="h-[6px] pt-px"><hr class="border-t-2 border-[#d0d0d0]" /></li>
                            <li><button>
                                <svg class="w-[46px] h-[46px]" viewBox="0 0 46 46" fill="none" stroke="#565d6a" stroke-width="1.800"><path d="M10 13H20M22 14l5 6M27 22V28M27 31V37M26 39l-5 5M18 44H10M7 43l-5-5M2 36V30M2 27V21M3 19l5-5" /><path d="M19 13L22 9H28" /><circle cx="36" cy="9" r="8" fill="#e3e5ea" /><path d="M28 9H44M34 4.500l2-1.500v5M32 12h8M33 14h6" /></svg>Callout Tags</button></li>
                            <li><button>
                                <svg class="w-[46px] h-[46px]" viewBox="0 0 46 46"><path d="M23 2L46 25H0z" fill="#3b424e" /><rect x="11" y="19" width="24" height="23" fill="url(#steel)" stroke="#4b5362" stroke-width="1.800" /></svg>Elevation Tags</button></li>
                            <li><button>
                                <svg class="w-[46px] h-[46px]" viewBox="0 0 46 46"><path d="M18 0L44 20 22 38V46H18z" fill="#3b424e" /><circle cx="18" cy="21" r="13" fill="url(#steel)" stroke="#60666f" stroke-width="2" /></svg>Section Tags</button></li>
                            <li><button>
                                <svg class="w-[46px] h-[46px]" viewBox="0 0 46 46"><path d="M0 7H40M6 22H46M6 37H40" stroke="#4b5058" stroke-width="2" /><path d="M46 7L36 1.500V12.500zM0 22L10 16.500V27.500zM0 37L10 31.500V42.500zM46 37L36 31.500V42.500z" fill="#3b424e" /></svg>Arrowheads</button></li>
                            <li><button>
                                <svg class="w-[46px] h-[46px]" viewBox="0 0 46 46"><path d="M1 0V43M45 0V27M4 12H42" stroke="#4b5058" stroke-width="1.800" /><path d="M2 12L8 8V16zM44 12L38 8V16z" fill="#3b424e" /><circle cx="36" cy="34" r="9" fill="#e9eef3" stroke="#60666f" stroke-width="2" /><path d="M36 28V34H41" fill="none" stroke="#222" stroke-width="1.800" /></svg>Temporary Dimensions</button></li>
                            <li class="h-[6px] pt-px"><hr class="border-t-2 border-[#d0d0d0]" /></li>
                            <li><button>
                                <svg class="w-[46px] h-[46px]" viewBox="0 0 46 46"><path d="M1 7H45V38H1z" fill="#eceef1" /><path d="M1 7H16V17H1zM31 7H45V17H31z" fill="#3f4652" /><path d="M16 17H31V28H16z" fill="#666c74" /><path d="M1 28H16V38H1zM31 28H45V38H31z" fill="#a4a7ac" /><path d="M16 7H31V17H16z" fill="#cdd0dc" /><path d="M1 7H45V38H1z" fill="none" stroke="#3f4652" stroke-width="2" /></svg>Detail Level</button></li>
                            <li class="h-[6px] pt-px"><hr class="border-t-2 border-[#d0d0d0]" /></li>
                            <li><button>
                                <svg class="w-[46px] h-[46px]" viewBox="0 0 46 46"><path d="M9 3H1V38H9M35 3H43V20" fill="none" stroke="#4b5058" stroke-width="2" /><text x="5" y="27" font-size="17" font-weight="700" fill="#3f4449" font-family="Liberation Sans, sans-serif">A10</text><svg x="31" y="17" width="15" height="29"><use href="#wrench" /></svg></svg>Assembly Code</button></li>
                        </ul>
                    </div>
                </div>
            </div>
            <p class="text-center">Settings</p>
        </div>
        <div class="w-[2px] mt-[2px] shrink-0 bg-[#dadada]"></div>

        <div class="flex flex-col justify-between pl-1">
            <div class="flex gap-2 items-start pt-[10px]">
                <button class="w-[74px] flex flex-col items-center">
                    <svg class="w-[46px] h-[46px]" viewBox="0 0 46 46"><use href="#globe" /><path d="M35 30L29 17a6.500 6.500 0 1 1 12 0z" fill="#f0561f" stroke="#fff" stroke-width="1.500" /></svg>
                    <span class="mt-[9px]">Location</span>
                </button>
                <button class="w-[110px] flex flex-col items-center">
                    <svg class="w-[46px] h-[46px] mr-[6px]" viewBox="0 0 46 46"><path d="M9 40L28 22" stroke="#4fc12e" stroke-width="2" /><path d="M32 18l-2 8-6-6z" fill="#4fc12e" /><path d="M8 41V10" stroke="#1e62b8" stroke-width="2" /><path d="M8 4l4 7H4z" fill="#1e62b8" /><path d="M8 41H40" stroke="#e02424" stroke-width="2" /><path d="M45 41l-7 4v-8z" fill="#e02424" /></svg>
                    <span class="mt-[8px]">Coordinates</span>
                    <svg class="mt-[3px] w-[7px] h-1"><use href="#caret" /></svg>
                </button>
            </div>
            <p class="pl-[140px]">Location</p>
        </div>
    </section>

    <!-- Options bar -->
    <section class="h-[39px] shrink-0 flex items-center bg-[#e5f0d7] text-[#111] whitespace-nowrap">
        <span class="w-[250px] pl-[6px]">Modify | Place Detail Lines</span>
        <span class="w-[7px] h-[34px] border-l border-[#9a9a9a] ml-[6px] mr-2"></span>
        <label class="relative w-[92px] flex items-center gap-[5px]">
            <input type="checkbox" checked class="appearance-none w-5 h-5 bg-white border border-[#222]" />
            <svg class="absolute left-[3px] w-[14px] h-3" viewBox="0 0 14 12"><path d="M1 6l4 4L13 1" fill="none" stroke="#222" stroke-width="1.800" /></svg>
            Chain</label>
        <label for="offset" class="w-[57px]">Offset:</label>
        <input id="offset" value="0.0" class="w-[120px] h-9 pl-[7px] pb-1 bg-white border border-[#6e6e6e]" />
        <label class="w-[98px] ml-[9px] flex items-center gap-[5px]">
            <input type="checkbox" class="appearance-none w-5 h-5 bg-white border border-[#222]" />
            Radius:</label>
        <input aria-label="Radius" disabled value="1000.0" class="w-[120px] h-9 pl-2 pb-1 bg-transparent border border-[#cfcfcf] outline outline-white -outline-offset-2 text-[#7b7b7b]" />
    </section>

    <main class="flex-1 min-h-0 flex pt-[3px]">
        <!-- Docked palettes -->
        <aside class="w-[323px] shrink-0 flex flex-col bg-[#eeeeee]">
            <div class="h-[30px] shrink-0 flex items-center justify-between pr-[7px]">
                <h2>Properties</h2>
                <button aria-label="Close Properties"><svg class="w-[15px] h-[14px]" viewBox="0 0 15 14"><path d="M1.500 1L13.500 13M13.500 1L1.500 13" stroke="#2d2d2d" stroke-width="3" /></svg></button>
            </div>
            <div class="flex-1 min-h-0 flex flex-col mr-[3px]">
                <div class="h-[105px] shrink-0 flex items-center justify-between bg-linear-to-b from-[#f4f4f4] to-[#e6e6e6] border border-l-0 border-[#e2e2e2] pt-[3px] pl-px pr-[2px]">
                    <svg class="w-[99px] h-[99px] border border-[#dcdcdc]" viewBox="0 0 99 99"><path d="M0 0H99V99H0z" fill="#ececec" /><path d="M4 4H30V58H4z" fill="#dadada" /><path d="M50 58L92 60 93 70z" fill="#f7f7f7" /><path fill-rule="evenodd" d="M27 9L40 8H56c9 2 14 9 14 18 0 7-2 13-7 19L79 74 70 73 48 46 43 46V72L34 74 28 71zM44 18c-4 6-4 12 0 16 5 1 9-1 9-8 0-6-3-8-9-8z" fill="#a0a0a0" /><path d="M27 9L36 42 34 74 28 71z" fill="#8b8b8b" /><path d="M63 45L79 74 70 73 48 46z" fill="#929292" /></svg>
                    <svg class="w-3 h-[7px] text-[#8d8d8d]"><use href="#caret" /></svg>
                </div>
                <div class="h-[34px] mt-px shrink-0 flex items-center">
                    <div class="relative">
                        <select aria-label="Type" class="appearance-none w-[213px] h-[33px] pr-7 bg-[#e1e1e1] border border-l-0 border-[#ababab] text-black">
                            <option>New Lines (&lt;Centerline&gt;)</option>
                        </select>
                        <svg class="absolute right-[7px] top-[13px] w-3 h-[7px]" viewBox="0 0 12 7"><path d="M1 1l5 5 5-5" fill="none" stroke="#444" stroke-width="1.500" /></svg>
                    </div>
                    <button disabled class="flex items-center gap-[5px] pl-[6px] pb-[3px] text-[#a3a3a3] whitespace-nowrap">
                        <svg class="w-4 h-4" viewBox="0 0 16 16" fill="none" stroke="#9a9a9a"><path d="M.5 2L2 .5H7V7H.5zM9 2l1.500-1.500H15V6M9 2V6M.5 9H7V15H.5zM9.500 7.500h6v8h-6zM11 10h3M11 13h1M13 13h1" /></svg>
                        Edit Type</button>
                </div>
                <table class="table-fixed w-full bg-white text-black leading-[27px]">
                    <colgroup>
                        <col class="w-[148px]" />
                        <col class="w-[153px]" />
                        <col />
                    </colgroup>
                    <thead>
                        <tr class="h-[30px] bg-[#dadada]">
                            <th colspan="3" class="text-left font-normal p-0">
                                <div class="flex justify-between pr-[6px]">Graphics
                                    <svg class="w-[7px] h-[9px] mt-[3px]" viewBox="0 0 7 9"><path d="M.5 4l3-3 3 3M.5 8l3-3 3 3" fill="none" stroke="#111" stroke-width="1.500" /></svg>
                                </div>
                            </th>
                        </tr>
                    </thead>
                    <tbody>
                        <tr class="h-[30px] border-b border-dotted border-[#555]">
                            <td class="pl-2 pb-[2px]">Line Style</td>
                            <td><input aria-label="Line Style" value="&lt;Centerline&gt;" class="block w-full h-[29px] pl-[3px] pb-[3px] border border-black" /></td>
                            <td class="border-x border-dotted border-[#555]"></td>
                        </tr>
                        <tr class="h-[30px] border-b border-dotted border-[#555] text-[#7d7d7d]">
                            <td class="pl-2 pb-[2px]">Detail Line</td>
                            <td class="relative border-l border-dotted border-[#555] pl-[3px]">
                                <input aria-label="Detail Line" type="checkbox" checked disabled class="block appearance-none w-5 h-5 mb-[3px] bg-white border border-[#c6c6c6]" />
                                <svg class="absolute left-[6px] top-[7px] w-[14px] h-3" viewBox="0 0 14 12"><path d="M1 6l4 4L13 1" fill="none" stroke="#c6c6c6" stroke-width="1.800" /></svg>
                            </td>
                            <td class="border-x border-dotted border-[#555]"></td>
                        </tr>
                    </tbody>
                </table>
                <div class="flex-1 bg-white"></div>
                <div class="h-[39px] shrink-0 flex items-start justify-between pt-[3px] pr-[2px]">
                    <a href="#help" class="leading-[27px] text-[#0a66cc] underline underline-offset-3">Properties help</a>
                    <button disabled class="w-[111px] h-[31px] bg-[#cccccc] border border-[#bdbdbd] text-[#868686]">Apply</button>
                </div>
            </div>
            <div class="h-[3px] shrink-0 bg-[#cccccc]"></div>
            <div class="h-[73px] shrink-0 overflow-hidden">
                <div class="h-[30px] flex items-center justify-between pr-[7px]">
                    <h2 class="w-[290px] truncate">Project Browser - RAC_basic_sample_project.rvt</h2>
                    <button aria-label="Close Project Browser"><svg class="w-[15px] h-[14px]" viewBox="0 0 15 14"><path d="M1.500 1L13.500 13M13.500 1L1.500 13" stroke="#2d2d2d" stroke-width="3" /></svg></button>
                </div>
                <div class="flex mr-[3px]">
                    <ul class="flex-1 bg-white text-black leading-[29px]">
                        <li class="flex items-center pl-px">
                            <svg class="w-[25px] h-[29px]" viewBox="0 0 25 29"><path d="M7.500 22V29M16 14.500H25" stroke="#888" stroke-dasharray="1 1" /><rect x=".5" y="7.500" width="14" height="14" fill="#f0f0f0" stroke="#8e8e8e" /><path d="M3 14.500H12" stroke="#3c5fae" /></svg>
                            <svg class="w-[23px] h-[23px]" viewBox="0 0 23 23" fill="none" stroke="#5b5f68" stroke-width="1.800"><path d="M1 5V1H5M18 1H22V5M22 18V22H18M5 22H1V18" /><path d="M6 9L9 6H17V13L14 17H6z" fill="#eceef1" stroke-width="1.500" /><path d="M14 17V9L17 6" stroke-width="1.200" /></svg>
                            <span class="pl-[7px]">Views (all)</span>
                        </li>
                        <li class="flex items-start pl-px leading-[26px]">
                            <svg class="w-[58px] h-[29px]" viewBox="0 0 58 29"><path d="M7.500 0V29M37.500 0V6M45 13.500H58" stroke="#888" stroke-dasharray="1 1" /><rect x="30.500" y="6.500" width="14" height="14" fill="#f0f0f0" stroke="#8e8e8e" /><path d="M33 13.500H42" stroke="#3c5fae" /></svg>
                            <span class="pl-1">Floor Plans</span>
                        </li>
                    </ul>
                    <div class="w-6 h-16 bg-[#cccccc]">
                        <button aria-label="Scroll up" class="w-6 h-[26px] flex items-center justify-center bg-[#f0f0f0]"><svg class="w-3 h-2" viewBox="0 0 12 8"><path d="M1 7l5-5 5 5" fill="none" stroke="#444" stroke-width="2.500" /></svg></button>
                    </div>
                </div>
            </div>
        </aside>

        <!-- Views -->
        <section class="flex-1 min-w-0 ml-[3px] flex flex-col">
            <div class="h-[30px] shrink-0 flex">
                <button class="w-[217px] flex items-center pl-[7px] gap-[11px]">
                    <svg class="w-6 h-5" viewBox="0 0 24 20" fill="none" stroke="#8a8d93" stroke-width="1.500"><path d="M1 1H17L23 6V19H1z" fill="#d9dadd" /><path d="M17 1V6H23M5 6H14V11H9V15H4V9M12 15H17V6" stroke="#9aa0aa" /></svg>
                    A001 - Title Sheet</button>
                <button class="w-[193px] flex items-center pl-2 gap-[11px]">
                    <svg class="w-6 h-[22px] opacity-50"><use href="#plan" /></svg>
                    Level 1</button>
                <div class="w-[192px] flex items-center justify-between pl-[7px] pr-[7px] bg-white">
                    <button class="flex items-center gap-[11px] font-bold"><svg class="w-6 h-[22px]"><use href="#plan" /></svg>Level 2</button>
                    <button aria-label="Close Level 2"><svg class="w-[15px] h-[14px]" viewBox="0 0 15 14"><path d="M1.500 1L13.500 13M13.500 1L1.500 13" stroke="#2d2d2d" stroke-width="3" /></svg></button>
                </div>
            </div>

            <div class="flex-1 min-h-0 bg-white">
                <svg class="block w-full h-full" viewBox="326 291 1274 945" preserveAspectRatio="xMinYMin slice" fill="none" stroke="#000" font-family="Liberation Sans, sans-serif" shape-rendering="crispEdges">
                    <!-- room fills -->
                    <g stroke="none">
                        <path d="M1540 823H1600V973H1540z" fill="#4040c0" />
                        <path d="M1540 981H1581V1030H1540zM1540 1038H1600V1110H1540zM1540 1152H1600V1158H1540z" fill="#c040c0" />
                    </g>
                    <!-- site boundary and dimension -->
                    <path d="M700.500 1236V727.500H1600M1306 719.500H1600" />
                    <path d="M795.500 1096L787.500 1147M782.500 1182L777.500 1214" shape-rendering="auto" />
                    <!-- grid lines -->
                    <g>
                        <path d="M850 822.500H916M934 822.500H952M970 822.500H1041M1058 822.500H1076M1094 822.500H1165M1182 822.500H1200M1218 822.500H1235" />
                        <path d="M850 990.500H916M934 990.500H952M970 990.500H1041M1058 990.500H1076M1094 990.500H1165M1182 990.500H1200M1218 990.500H1289M1306 990.500H1324" />
                        <path d="M850 1157.500H916M934 1157.500H952M970 1157.500H1041M1058 1157.500H1076M1094 1157.500H1165M1182 1157.500H1200M1218 1157.500H1235" />
                    </g>
                    <!-- section marks -->
                    <g shape-rendering="auto">
                        <circle cx="1318" cy="548" r="35" />
                        <path d="M1075 893L1100.500 919 1075 945A36 36 0 0 0 1075 893z" fill="#000" />
                        <circle cx="1051" cy="919" r="35.500" fill="#fff" />
                    </g>
                    <!-- walls -->
                    <g stroke-width="2">
                        <path d="M1225 832V812H1600M1228 832V815.500H1600M1236 832V822H1600" />
                        <path d="M1225 1148V1168M1228 1148V1166H1600M1236 1148V1158H1600" />
                    </g>
                    <path d="M1224 832.500H1237.500V1148.500H1224M1234.500 832V1148M1224 1169.500H1320M1235 939.500H1320M1235 993.500H1320" />
                    <g shape-rendering="auto">
                        <path d="M1320 825.500H1279.500C1281 845 1290 858 1308 863M1320 905.500H1279.500C1281 885 1290 872 1308 866M1290 854L1308 865" />
                        <rect x="1230.500" y="849.500" width="67" height="34" rx="17" />
                        <path d="M1424 1202L1433 1216H1457L1466 1202M1600 1190L1596 1184.500H1573L1563 1200 1573 1216.500H1596L1600 1210" />
                    </g>
                    <path d="M1319.500 1200V1227M1487.500 1200V1227" />
                    <!-- bathroom fixtures -->
                    <path d="M1540 974H1600M1540 980.500H1581.500V1030.500H1540" stroke-width="2" />
                    <path d="M1600 980H1588V1030H1600M1540 1037H1600M1572 1038V1054H1598V1038" stroke-width="2" fill="#fff" />
                    <path d="M1600 985H1592V1026H1600M1592 985L1600 993M1592 1026L1600 1018M1562 990.500H1572" />
                    <path d="M1560 996C1576 994 1576 1016 1560 1014M1566 996L1581 998V1012L1566 1014C1572 1008 1572 1002 1566 996zM1575 997V1013" fill="#fff" />
                    <path d="M1540 1110.500H1600V1150H1540z" fill="#fff" />
                    <path d="M1600 1117H1575C1567 1117 1562 1120 1562 1124V1140C1562 1144 1567 1146 1575 1146H1600M1540 1152.500H1600" shape-rendering="auto" />
                    <path d="M1584.500 1044l2 2.500-2 2.500-2-2.500zM1584.500 1129l2.500 2.500-2.500 2.500-2.500-2.500z" />
                    <path d="M1540 1159H1600M1540 1164H1600" stroke-width="2" />
                    <path d="M1595.500 910L1590.500 932H1600.500z" fill="#0a8a0a" />
                    <path d="M1595 932V974" stroke-width="2" />
                    <!-- labels -->
                    <g fill="#000" stroke="none">
                        <text x="1561" y="706" font-size="17" font-weight="700">000</text>
                        <text x="1029" y="926" font-size="18">A1-04</text>
                        <text x="1105" y="925" font-size="20">2</text>
                        <text x="1235" y="874" font-size="24">206B</text>
                        <text x="1245" y="975" font-size="28">Deck</text>
                        <text x="1596" y="1080" font-size="26" text-anchor="end">Master</text>
                        <text x="1570" y="1207" font-size="24">46</text>
                        <text x="1431" y="1207" font-size="24">46</text>
                    </g>
                    <path d="M1051.500 584V1236" stroke="#0a7f0a" stroke-dasharray="18 17" stroke-dashoffset="3" />
                </svg>
            </div>
        </section>
    </main>
</body>

</html>
